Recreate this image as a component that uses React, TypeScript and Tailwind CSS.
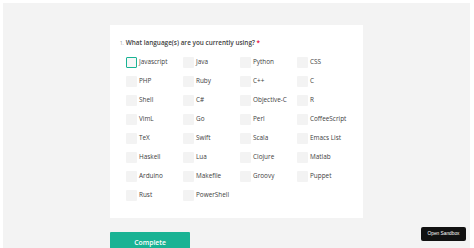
import React from "react";

const langs = [
  "Javascript", "Java", "Python", "CSS",
  "PHP", "Ruby", "C++", "C",
  "Shell", "C#", "Objective-C", "R",
  "VimL", "Go", "Perl", "CoffeeScript",
  "TeX", "Swift", "Scala", "Emacs List",
  "Haskell", "Lua", "Clojure", "Matlab",
  "Arduino", "Makefile", "Groovy", "Puppet",
  "Rust", "PowerShell",
];

export default function App() {
  return (
    <div className="w-[474px] h-[248px] overflow-hidden bg-white p-[3px] pr-[4px] pb-0" style={{ fontFamily: '"Open Sans", sans-serif' }}>
      <div className="relative h-[245px] bg-[#f3f3f3] pt-[22px] pl-[107px]">
        <div className="w-[253px] h-[193px] bg-white pt-[11px] pl-[10px]">
          <div className="flex items-baseline gap-[2px] h-[12px]">
            <span className="text-[4.5px] text-[#909090]">1.</span>
            <span className="text-[6.4px] font-semibold text-[#404040] leading-[13px]">
              What language(s) are you currently using? <span className="text-[#e60a3e]">*</span>
            </span>
          </div>
          <div className="grid grid-cols-[57px_57px_57px_57px] mt-[5px] ml-[6px]">
            {langs.map((l, i) => (
              <div key={l} className="flex items-center h-[19px]">
                <div
                  className={
                    i === 0
                      ? "w-[11px] h-[11px] border border-[#1ab394] bg-[#f7f7f7] rounded-[1px]"
                      : "w-[11px] h-[11px] bg-[#f3f3f3] rounded-[1px]"
                  }
                />
                <span className="ml-[2px] text-[6.4px] text-[#404040] leading-none">{l}</span>
              </div>
            ))}
          </div>
        </div>
        <div className="mt-[14px] w-[80px] h-[22px] bg-[#19b394] rounded-[1px] flex items-center justify-center">
          <span className="text-[6.8px] text-white font-semibold">Complete</span>
        </div>
        <div className="absolute left-[418px] top-[224px] w-[45px] h-[14px] bg-[#111111] rounded-[2px] flex items-center justify-center">
          <span className="text-[4.8px] text-white" style={{ fontFamily: '"Liberation Sans", sans-serif' }}>Open Sandbox</span>
        </div>
      </div>
    </div>
  );
}
